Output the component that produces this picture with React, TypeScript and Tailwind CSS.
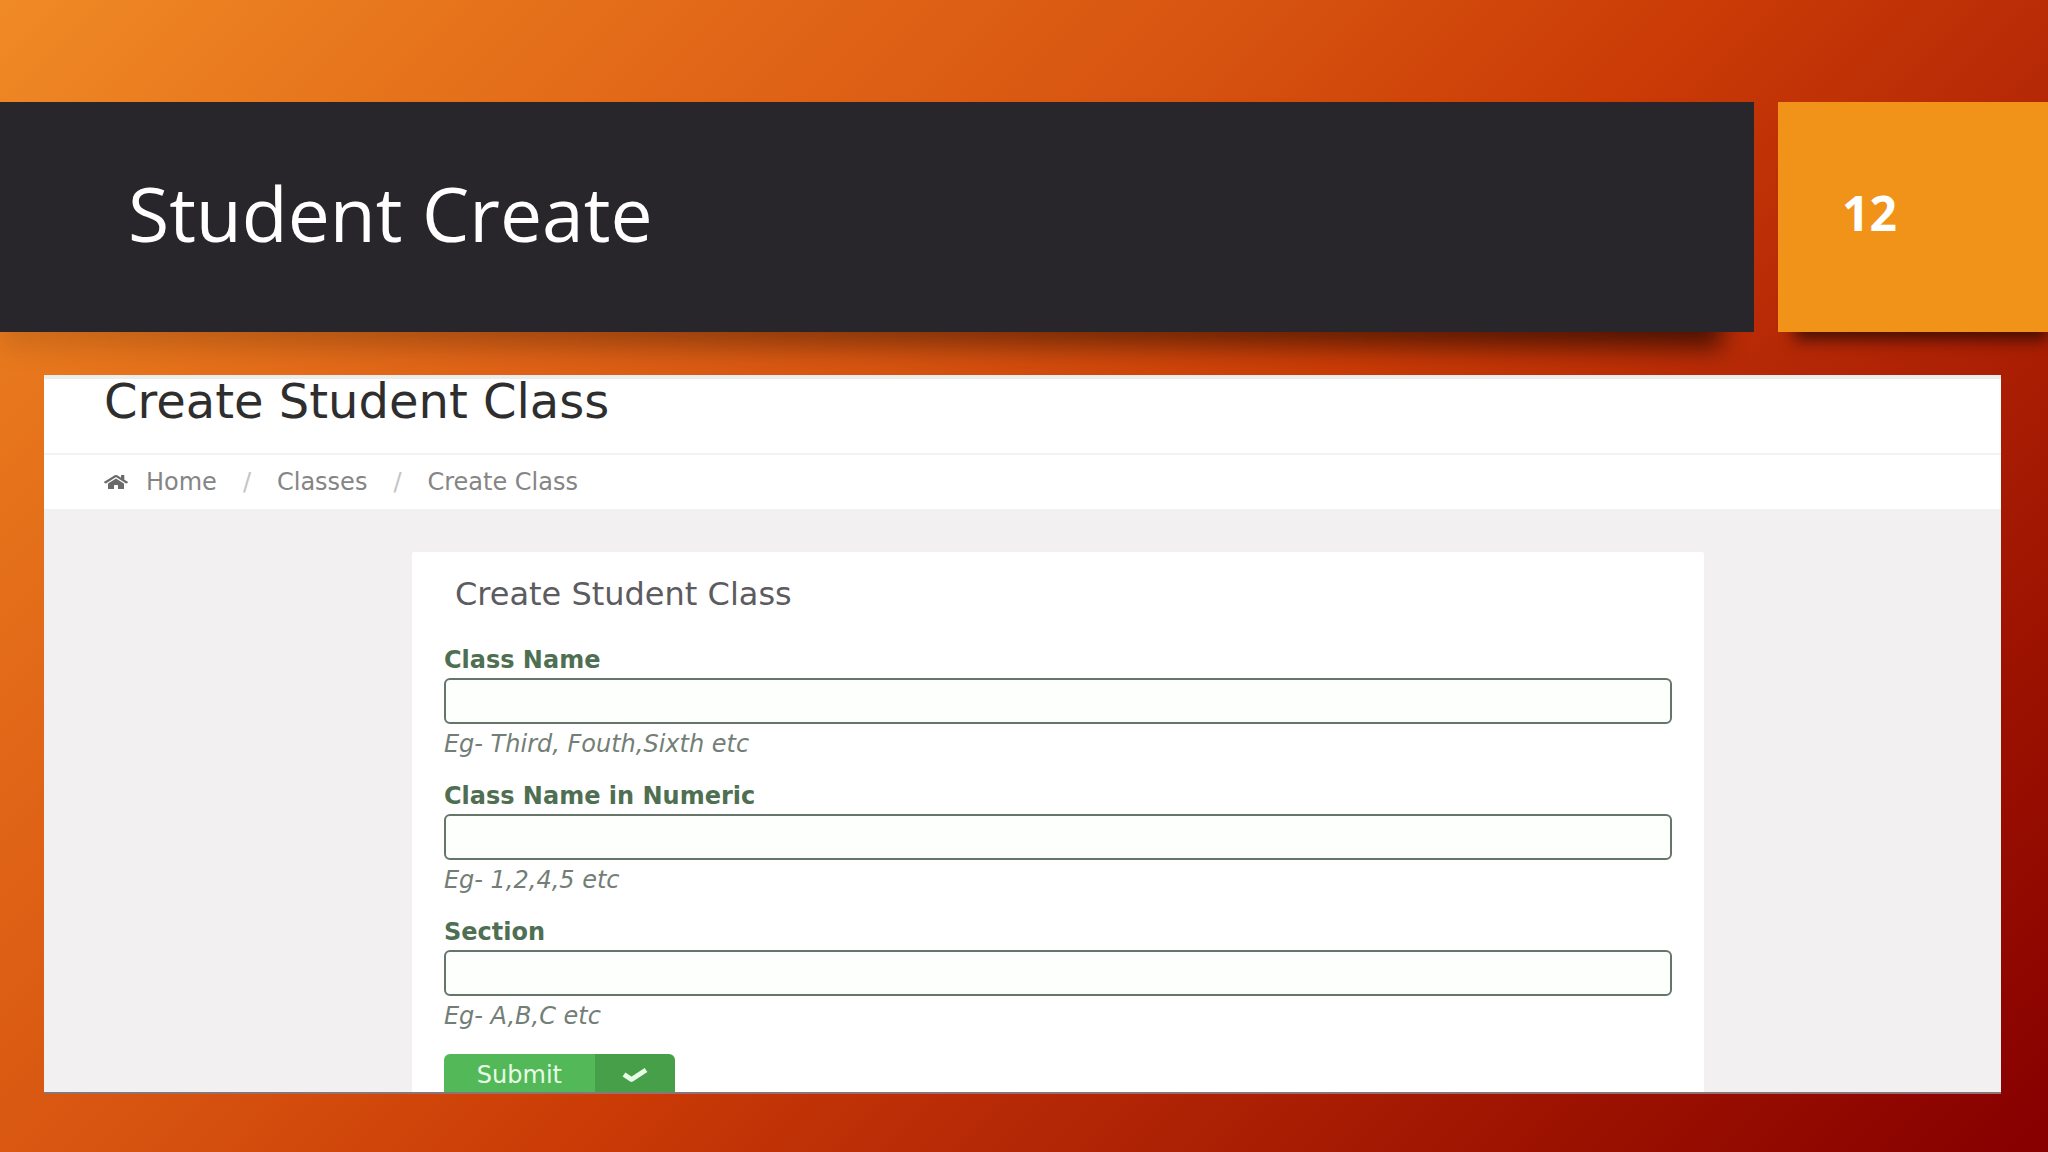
import { FaHome } from "react-icons/fa";

const fields = [
  { id: "class-name", label: "Class Name", hint: "Eg- Third, Fouth,Sixth etc" },
  { id: "class-numeric", label: "Class Name in Numeric", hint: "Eg- 1,2,4,5 etc" },
  { id: "section", label: "Section", hint: "Eg- A,B,C etc" },
];

function CheckIcon() {
  return (
    <svg viewBox="0 0 26 16" className="h-4 w-[26px]" fill="none" stroke="currentColor" strokeWidth="5">
      <path d="M2 7.5 L9.5 12.5 L24 3" strokeLinejoin="round" />
    </svg>
  );
}

function SlideHeader() {
  return (
    <header className="flex h-[230px] gap-6">
      <div className="relative flex-1">
        {/* soft shadow under the title bar, fading out to the left */}
        <div className="absolute top-6 right-8 -bottom-4 left-0 bg-linear-to-r from-black/10 to-black/60 blur-md" />
        <div className="relative flex h-full items-center bg-[#28262a] pb-2 pl-32">
          <h1 className="text-[75px] leading-none text-white">Student Create</h1>
        </div>
      </div>
      <div className="relative w-[270px]">
        <div className="absolute top-6 right-0 -bottom-2 left-4 bg-black/60 blur-sm" />
        <div className="relative flex h-full items-center bg-[#f09318] pb-2 pl-16">
          <span className="text-5xl font-bold text-white">12</span>
        </div>
      </div>
    </header>
  );
}

function Breadcrumb() {
  return (
    <nav aria-label="Breadcrumb" className="flex h-[54px] items-center gap-[26px] px-15 text-2xl text-[#858585]">
      <a href="#" className="flex items-center gap-[18px]">
        <FaHome className="h-4 w-6 text-[#6a6a6a]" preserveAspectRatio="none" />
        Home
      </a>
      <span className="text-[#c4c4c4]">/</span>
      <a href="#">Classes</a>
      <span className="text-[#c4c4c4]">/</span>
      <span>Create Class</span>
    </nav>
  );
}

function ClassForm() {
  return (
    <form className="mt-[43px] mr-[15.2%] ml-[18.8%] rounded-t-xs bg-white px-8 pt-6">
      <h3 className="mb-[30px] px-[11px] text-[32px] leading-9 text-[#5c5b60]">Create Student Class</h3>
      {fields.map((f) => (
        <div key={f.id} className="mb-[14px]">
          <label htmlFor={f.id} className="block text-2xl leading-9 font-bold text-[#4f6f53]">
            {f.label}
          </label>
          <input
            id={f.id}
            type="text"
            className="block h-[46px] w-full rounded-md border-2 border-[#65756a] bg-[#fdfffd] px-3 outline-none"
          />
          <p className="text-2xl leading-10 text-[#737e76] italic">{f.hint}</p>
        </div>
      ))}
      <button type="button" className="mt-[18px] flex h-[38px] overflow-hidden rounded-t-md text-2xl text-[#e8fbe6]">
        <span className="flex h-full w-[151px] items-center justify-center bg-[#53b958] pt-1">Submit</span>
        <span className="flex h-full w-20 items-center justify-center bg-[#489f49] pt-1">
          <CheckIcon />
        </span>
      </button>
    </form>
  );
}

export default function App() {
  return (
    <main className="flow-root min-h-screen bg-[linear-gradient(135deg,#f08a26_0%,#e7761c_13%,#e06417_26%,#d75410_39%,#cb3c06_53%,#b52806_67%,#9c1200_84%,#880000_99%)] pt-[102px] pb-15 font-['Open_Sans',sans-serif]">
      <SlideHeader />
      <section className="mt-[43px] mr-[47px] ml-11 border-b-2 border-[#8a7476] bg-[#f2f0f1] font-['DejaVu_Sans',sans-serif]">
        <div className="bg-white">
          <div className="h-20 border-t-4 border-b-2 border-t-[#eceeee] border-b-[#f4f2f3] px-15">
            <h2 className="text-5xl leading-11 text-[#2e2e2e]">Create Student Class</h2>
          </div>
          <Breadcrumb />
        </div>
        <ClassForm />
      </section>
    </main>
  );
}
